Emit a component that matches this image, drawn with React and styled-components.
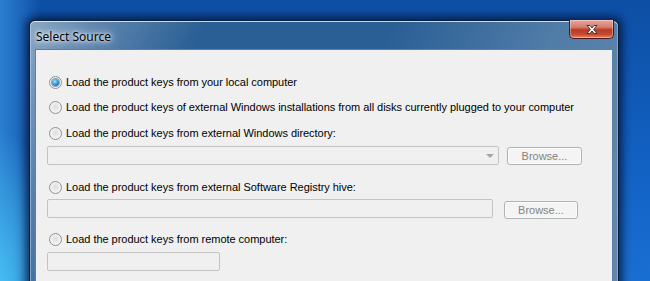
import styled, { createGlobalStyle } from "styled-components";

const GlobalStyle = createGlobalStyle`
  html, body {
    margin: 0;
    padding: 0;
    overflow: hidden;
  }
  body {
    font-family: "Liberation Sans", Arial, sans-serif;
  }
`

const Desktop = styled.div`
  width: 650px;
  height: 281px;
  overflow: hidden;
  background:
    radial-gradient(ellipse 60px 160px at 0px 290px, #47c0f4 0%, rgba(71,192,244,0) 100%),
    linear-gradient(90deg, #2b7fd0 0px, #1a62b8 25px, rgba(0,0,0,0) 40px),
    linear-gradient(180deg, #0d4fa4 0%, #1262c4 60%, #1a6fd2 100%);
  padding-top: 20px;
  padding-left: 29px;
  box-sizing: border-box;
`

const Window = styled.div`
  width: 590px;
  height: 290px;
  box-sizing: border-box;
  border: 1px solid #0b2038;
  border-radius: 6px 6px 0 0;
  background:
    linear-gradient(115deg, rgba(255,255,255,0.45) 0px, rgba(255,255,255,0.25) 60px, rgba(255,255,255,0) 160px, rgba(255,255,255,0) 330px, rgba(255,255,255,0.18) 480px, rgba(255,255,255,0.25) 600px),
    #2a5f95;
  box-shadow:
    inset 0 1px 0 rgba(255,255,255,0.75),
    inset 1px 0 0 rgba(255,255,255,0.35),
    inset -1px 0 0 rgba(255,255,255,0.3),
    0 0 10px 3px rgba(0,10,40,0.75);
  display: flex;
  flex-direction: column;
`

const TitleBar = styled.div`
  height: 28px;
  display: flex;
  align-items: flex-start;
  justify-content: space-between;
  padding-left: 6px;
  padding-right: 4px;
`

const Title = styled.span`
  margin-top: 7px;
  font-family: "Noto Sans", "Open Sans", sans-serif;
  font-size: 12px;
  color: #000;
  text-shadow: 0 0 6px rgba(255,255,255,0.95), 0 0 12px rgba(255,255,255,0.85), 0 0 3px rgba(255,255,255,0.9);
`

const CloseButton = styled.div`
  width: 45px;
  height: 19px;
  margin-top: -1px;
  box-sizing: border-box;
  border: 1px solid #4b1a14;
  border-top: none;
  border-radius: 0 0 5px 5px;
  background: linear-gradient(180deg, #e6a89c 0%, #d47c6c 40%, #b83a22 55%, #c54a30 80%, #e08a6c 100%);
  box-shadow: inset 0 0 0 1px rgba(255,255,255,0.35);
  display: flex;
  align-items: center;
  justify-content: center;
`

const Client = styled.div`
  flex: 1;
  margin: 0 5px;
  border: 1px solid #5d7fa2;
  border-bottom: none;
  background: #f0f0f0;
  padding: 24px 0 0 11px;
  display: flex;
  flex-direction: column;
`

const OptionRow = styled.label`
  display: flex;
  align-items: center;
  height: 16px;
  margin-top: ${p => p.$gap || 0}px;
  font-family: "Liberation Sans", Arial, sans-serif;
  font-size: 11px;
  letter-spacing: -0.03px;
  color: #000;
  white-space: nowrap;
`

const Radio = styled.span`
  flex-shrink: 0;
  width: 13px;
  height: 13px;
  box-sizing: border-box;
  border-radius: 50%;
  margin-left: 2px;
  margin-right: 4px;
  border: 1px solid #8e8f8f;
  background: radial-gradient(circle at 50% 45%, #dcdcdc 0%, #f6f6f6 70%, #ffffff 100%);
  display: flex;
  align-items: center;
  justify-content: center;
  &::after {
    content: "";
    width: 7px;
    height: 7px;
    border-radius: 50%;
    display: ${p => (p.$checked ? "block" : "none")};
    background: radial-gradient(circle at 40% 35%, #a8e2ff 0%, #2a8fd0 55%, #0c4f8e 100%);
    box-shadow: 0 0 0 1px rgba(30,80,130,0.5);
  }
`

const FieldRow = styled.div`
  display: flex;
  align-items: ${p => (p.$align || "center")};
  margin-top: ${p => p.$gap || 0}px;
  gap: ${p => p.$spacing || 8}px;
`

const Field = styled.div`
  width: ${p => p.$width}px;
  height: ${p => p.$height || 19}px;
  box-sizing: border-box;
  border: 1px solid #c3c3c3;
  border-radius: 2px;
  background: #f0f0f0;
  display: flex;
  justify-content: flex-end;
  align-items: center;
`

const ComboArrow = styled.span`
  width: 17px;
  height: 100%;
  display: flex;
  align-items: center;
  justify-content: center;
  &::after {
    content: "";
    border-left: 4px solid transparent;
    border-right: 4px solid transparent;
    border-top: 4px solid #a6a6a6;
    margin-top: 1px;
  }
`

const BrowseButton = styled.button`
  width: ${p => p.$width}px;
  height: 18px;
  margin-top: ${p => p.$top || 0}px;
  box-sizing: border-box;
  border: 1px solid #adb2b5;
  border-radius: 3px;
  background: #f4f4f4;
  color: #838383;
  font-family: "Liberation Sans", Arial, sans-serif;
  font-size: 11px;
  padding: 0;
  line-height: 15px;
  box-shadow: inset 0 0 0 1px #fbfbfb;
`

function CloseIcon() {
  return (
    <svg width="14" height="11" viewBox="0 0 14 11">
      <path
        d="M2 1.5 L5 1.5 L7 4 L9 1.5 L12 1.5 L8.6 5.5 L12 9.5 L9 9.5 L7 7 L5 9.5 L2 9.5 L5.4 5.5 Z"
        fill="#ffffff"
        stroke="#3c2020"
        strokeWidth="0.9"
        strokeLinejoin="round"
      />
    </svg>
  )
}

export default function App() {
  return (
    <>
      <GlobalStyle />
      <Desktop>
        <Window>
          <TitleBar>
            <Title>Select Source</Title>
            <CloseButton>
              <CloseIcon />
            </CloseButton>
          </TitleBar>
          <Client>
            <OptionRow>
              <Radio $checked />
              Load the product keys from your local computer
            </OptionRow>
            <OptionRow $gap={9}>
              <Radio />
              Load the product keys of external Windows installations from all disks currently plugged to your computer
            </OptionRow>
            <OptionRow $gap={10}>
              <Radio />
              Load the product keys from external Windows directory:
            </OptionRow>
            <FieldRow $gap={5} $align="flex-start">
              <Field $width={452}>
                <ComboArrow />
              </Field>
              <BrowseButton $width={75} $top={1}>Browse...</BrowseButton>
            </FieldRow>
            <OptionRow $gap={14}>
              <Radio />
              Load the product keys from external Software Registry hive:
            </OptionRow>
            <FieldRow $gap={4} $spacing={11} $align="flex-start">
              <Field $width={446} />
              <BrowseButton $width={74} $top={2}>Browse...</BrowseButton>
            </FieldRow>
            <OptionRow $gap={12}>
              <Radio />
              Load the product keys from remote computer:
            </OptionRow>
            <FieldRow $gap={5}>
              <Field $width={173} />
            </FieldRow>
          </Client>
        </Window>
      </Desktop>
    </>
  )
}
